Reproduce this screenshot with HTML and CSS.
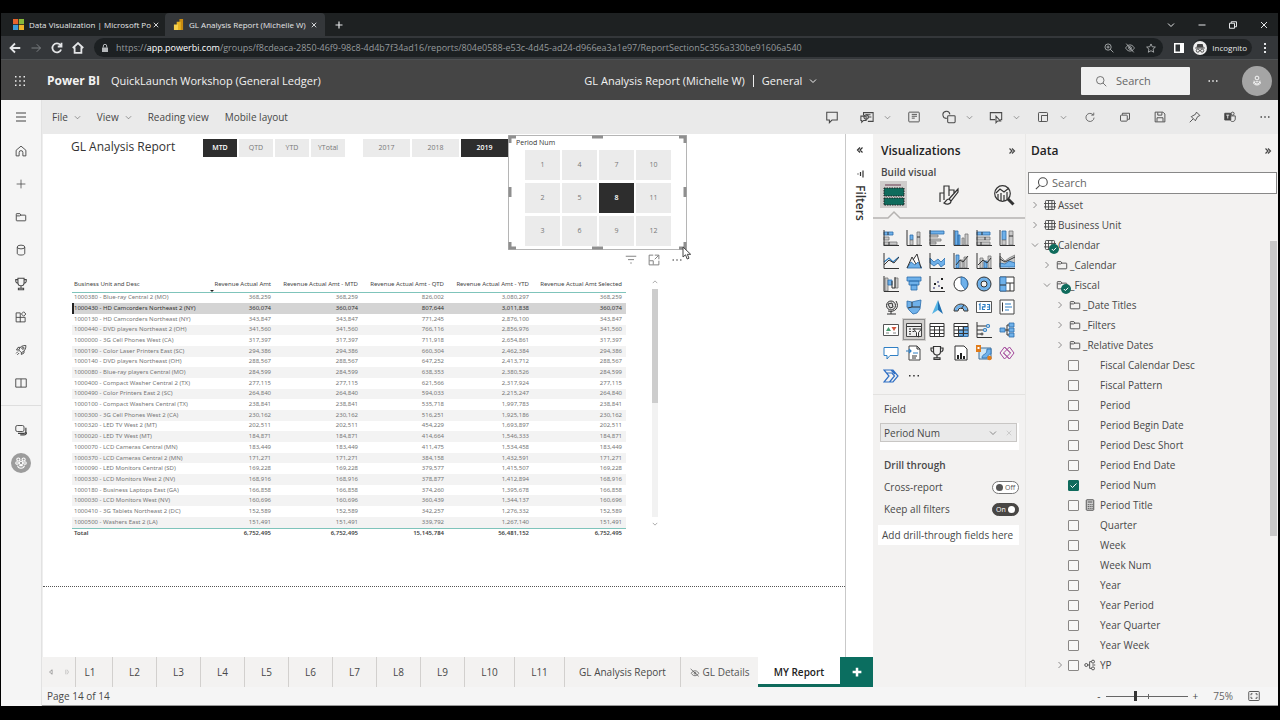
FILE: index.html
```html
<!DOCTYPE html>
<html lang="en">
<head>
<meta charset="utf-8">
<title>GL Analysis Report (Michelle W)</title>
<link rel="stylesheet" href="styles.css">
</head>
<body>
<svg class="defs" aria-hidden="true">
  <symbol id="chev" viewBox="0 0 16 16"><path d="M2 5l6 6 6-6"/></symbol>
  <symbol id="chevr" viewBox="0 0 16 16"><path d="M5 2l6 6-6 6"/></symbol>
  <symbol id="dbl" viewBox="0 0 16 16"><path d="M3 3l5 5-5 5M8 3l5 5-5 5"/></symbol>
  <symbol id="x" viewBox="0 0 16 16"><path d="M2 2l12 12M14 2L2 14"/></symbol>
  <symbol id="plus" viewBox="0 0 16 16"><path d="M8 1v14M1 8h14"/></symbol>
  <symbol id="dots" viewBox="0 0 16 16"><path d="M2 7h2v2H2zM7 7h2v2H7zM12 7h2v2h-2z" fill="currentColor" stroke="none"/></symbol>
  <symbol id="mag" viewBox="0 0 16 16"><circle cx="7" cy="7" r="5"/><path d="M10.600 10.600L15 15"/></symbol>
  <symbol id="folder" viewBox="0 0 16 16"><path d="M2 3.500h4.500l1.500 2h5.500a.8.8 0 0 1 .8.8v6a.8.8 0 0 1-.8.8h-11a.8.8 0 0 1-.8-.8V4.300a.8.8 0 0 1 .3-.8zM2 6.500h4l2-1"/></symbol>
  <symbol id="tbl" viewBox="0 0 16 16"><rect x="2" y="2" width="12" height="12" rx="1"/><path d="M0 6h16M0 10.500h16M6 2v12M10.500 2v12"/></symbol>
  <symbol id="tick" viewBox="0 0 16 16"><circle cx="8" cy="8" r="8" fill="#0f6b5c" stroke="none"/><path d="M4.500 8l2.500 2.500 4.500-4.500" stroke="#fff" stroke-width="1.600"/></symbol>
  <symbol id="trophy" viewBox="0 0 16 16"><path d="M4.500 1.500h7v5a3.500 3.500 0 0 1-7 0zM4.500 3H2v1.500a2.500 2.500 0 0 0 2.700 2.500M11.500 3H14v1.500A2.500 2.500 0 0 1 11.300 7M8 10v3M5 14.500v-1.700h6v1.700z"/></symbol>
</svg>

<div class="window">
  <div class="tabstrip">
    <div class="btab">
      <svg class="i12" viewBox="0 0 12 12"><path fill="#e8642c" d="M0 0h5.600v5.600H0z"/><path fill="#86b83a" d="M6.400 0H12v5.600H6.400z"/><path fill="#3c9ad6" d="M0 6.400h5.600V12H0z"/><path fill="#f0b429" d="M6.400 6.400H12V12H6.400z"/></svg>
      <span class="btab-name">Data Visualization | Microsoft Po</span>
      <button class="plain" aria-label="Close tab"><svg class="ico i6 heavy"><use href="#x"/></svg></button>
    </div>
    <div class="btab current">
      <svg class="i12" viewBox="0 0 12 12"><path fill="#c78a12" d="M7 0h4v12H7z"/><path fill="#e8b422" d="M4 3h4.500v9H4z"/><path fill="#f6d04d" d="M1 6h4.500v6H1z"/></svg>
      <span class="btab-name">GL Analysis Report (Michelle W)</span>
      <button class="plain" aria-label="Close tab"><svg class="ico i6 heavy"><use href="#x"/></svg></button>
    </div>
    <button class="plain newtab" aria-label="New tab"><svg class="ico i8 heavy"><use href="#plus"/></svg></button>
    <div class="wincontrols">
      <button class="plain" aria-label="Tabs"><svg class="ico i8"><use href="#chev"/></svg></button>
      <button class="plain" aria-label="Minimize"><svg class="ico i8" viewBox="0 0 16 16"><path d="M1 8h14"/></svg></button>
      <button class="plain" aria-label="Restore"><svg class="ico i8" viewBox="0 0 16 16"><path d="M1 4.500h10v10H1zM4.500 4V1.500H15v10h-3.500"/></svg></button>
      <button class="plain" aria-label="Close"><svg class="ico i8"><use href="#x"/></svg></button>
    </div>
  </div>

  <div class="addressbar">
    <div class="navbtns">
      <button class="plain" aria-label="Back"><svg class="ico i12 heavy" viewBox="0 0 16 16"><path d="M15 8H2M8 2L2 8l6 6"/></svg></button>
      <button class="plain dim" aria-label="Forward"><svg class="ico i12" viewBox="0 0 16 16"><path d="M2 8h12M9 3l5 5-5 5"/></svg></button>
      <button class="plain" aria-label="Reload"><svg class="ico i12 heavy" viewBox="0 0 16 16"><path d="M13.500 10A6 6 0 1 1 12.500 4L14 6M14 1v5H9"/></svg></button>
      <button class="plain" aria-label="Home"><svg class="ico i12 heavy" viewBox="0 0 16 16"><path d="M1 8l7-6.500L15 8M3.500 7v7.500h9V7"/></svg></button>
    </div>
    <div class="omnibox">
      <svg class="i8 lock" viewBox="0 0 8 8"><path d="M1 3.500h6V8H1z" fill="#b5b8bb"/><path d="M2.300 3.500V2a1.700 1.700 0 0 1 3.400 0v1.500" fill="none" stroke="#b5b8bb"/></svg>
      <span class="url">https://<b>app.powerbi.com</b>/groups/f8cdeaca-2850-46f9-98c8-4d4b7f34ad16/reports/804e0588-e53c-4d45-ad24-d966ea3a1e97/ReportSection5c356a330be91606a540</span>
      <div class="omni-icons">
        <svg class="ico i10" viewBox="0 0 16 16"><circle cx="6.500" cy="6.500" r="5"/><path d="M10 10l5 5M4 6.500h5M6.500 4v5"/></svg>
        <svg class="ico i10" viewBox="0 0 16 16"><path d="M1 8s2.500-5 7-5 7 5 7 5-2.500 5-7 5-7-5-7-5zM2 1l12 14"/><circle cx="8" cy="8" r="2.200"/></svg>
        <svg class="ico i10" viewBox="0 0 16 16"><path d="M8 1.500l2 4.500 5 .5-3.700 3.300 1 5L8 12.300l-4.300 2.500 1-5L1 6.500 6 6z"/></svg>
      </div>
    </div>
    <svg class="i10 side" viewBox="0 0 10 10"><path d="M0 0h10v10H0z" fill="#fff"/><path d="M1.500 1.500H6v7H1.500z" fill="#303437"/></svg>
    <div class="incog">
      <svg class="i14" viewBox="0 0 16 16"><circle cx="8" cy="8" r="8" fill="#eee"/><path d="M5 3.500h6l1 3.500H4zM2.500 7.500h11v1h-11z" fill="#444"/><g fill="none" stroke="#444"><circle cx="5.500" cy="11" r="1.800"/><circle cx="10.500" cy="11" r="1.800"/><path d="M7 11h2"/></g></svg>
      <span>Incognito</span>
    </div>
    <button class="plain kebab" aria-label="Menu"><svg class="i10" viewBox="0 0 10 10"><path d="M4 0h2v2H4zM4 4h2v2H4zM4 8h2v2H4z" fill="currentColor"/></svg></button>
  </div>

  <header class="apphead">
    <div class="brand">
      <svg class="i10" viewBox="0 0 10 10"><path fill="#eee" d="M0 0h1.500v1.500H0zM4.200 0h1.500v1.500H4.200zM8.500 0H10v1.500H8.500zM0 4.200h1.500v1.500H0zM4.200 4.200h1.500v1.500H4.200zM8.500 4.200H10v1.500H8.500zM0 8.500h1.500V10H0zM4.200 8.500h1.500V10H4.200zM8.500 8.500H10V10H8.500z"/></svg>
      <strong>Power BI</strong>
      <span>QuickLaunch Workshop (General Ledger)</span>
    </div>
    <button class="plain doc"><span>GL Analysis Report (Michelle W)</span><span class="bar"></span><span>General</span><svg class="ico i8"><use href="#chev"/></svg></button>
    <div class="headright">
      <label class="hsearch"><svg class="ico i12"><use href="#mag"/></svg><input type="text" placeholder="Search" aria-label="Search"></label>
      <button class="plain" aria-label="More"><svg class="ico i12"><use href="#dots"/></svg></button>
      <button class="avatar" aria-label="Account"><svg class="ico i12" viewBox="0 0 16 16"><circle cx="8" cy="4" r="2.500"/><path d="M4 7.500c0 6 8 6 8 0M3.500 9.500c-1 5 10 5 9 0M6 9h4"/></svg></button>
    </div>
  </header>

  <div class="shell">
    <nav class="rail" aria-label="Main">
      <button class="plain burger" aria-label="Expand"><svg class="ico i12" viewBox="0 0 12 12"><path d="M1 2h10M1 6h10M1 10h10"/></svg></button>
      <div class="rail-list">
        <button class="plain" aria-label="Home"><svg class="ico i12" viewBox="0 0 16 16"><path d="M1.500 7L8 1.500 14.500 7v7.500h-4V10a2.500 2.500 0 0 0-5 0v4.500h-4z"/></svg></button>
        <button class="plain" aria-label="Create"><svg class="ico i10"><use href="#plus"/></svg></button>
        <button class="plain" aria-label="Browse"><svg class="ico i12"><use href="#folder"/></svg></button>
        <button class="plain" aria-label="Data hub"><svg class="ico i12" viewBox="0 0 16 16"><ellipse cx="8" cy="4" rx="5" ry="2.500"/><path d="M3 4v8.500c0 3 10 3 10 0V4"/></svg></button>
        <button class="plain" aria-label="Metrics"><svg class="ico i14"><use href="#trophy"/></svg></button>
        <button class="plain" aria-label="Apps"><svg class="ico i12" viewBox="0 0 16 16"><path d="M1.500 2.500h5.500v12h-5.500zM1.500 8.500h12v6h-7M11.500 1l3 3-3 3-3-3z"/></svg></button>
        <button class="plain" aria-label="Learn"><svg class="ico i12" viewBox="0 0 16 16"><path d="M5 8c1-4 5-6.500 9.500-6C15 6.500 12 10.500 8.500 11.500zM5 8H2l2-3.500h3M8.500 11.500V14l3.500-2V9M4 10l-2.500 2.500M5.500 12l-2.500 2.500"/><circle cx="10.500" cy="5.500" r="1.500"/></svg></button>
        <button class="plain" aria-label="Workspaces"><svg class="ico i12" viewBox="0 0 16 16"><path d="M1 2.500h14v11H1zM8 2.500v11"/></svg></button>
      </div>
      <div class="rail-low">
        <button class="plain" aria-label="Deployment"><svg class="ico i12" viewBox="0 0 16 16"><rect x="1" y="2" width="11" height="8" rx="2"/><path d="M4 12.500h8a2.500 2.500 0 0 0 2.500-2.500V5M7 14.500h5a3.500 3.500 0 0 0 3.500-3.500" stroke-width="1.600"/></svg></button>
        <button class="badge" aria-label="Workspace"><svg class="ico i14" viewBox="0 0 16 16"><circle cx="5" cy="4" r="1.800"/><circle cx="11" cy="4" r="1.800"/><circle cx="3.500" cy="8" r="1.500"/><circle cx="12.500" cy="8" r="1.500"/><circle cx="8" cy="8" r="2"/><path d="M4 11c1 4 7 4 8 0M6 11h4"/></svg></button>
      </div>
    </nav>

    <div class="work">
      <div class="toolbar">
        <button class="plain menu">File<svg class="ico i8"><use href="#chev"/></svg></button>
        <button class="plain menu">View<svg class="ico i8"><use href="#chev"/></svg></button>
        <button class="plain menu">Reading view</button>
        <button class="plain menu">Mobile layout</button>
        <div class="tools">
          <button class="plain" aria-label="Comment"><svg class="ico i14" viewBox="0 0 16 16"><path d="M2 2.500h12v9H8l-3 3v-3H2z"/></svg></button>
          <button class="plain" aria-label="Copilot"><svg class="ico i14" viewBox="0 0 16 16"><path d="M4 6V3h11v10H9M7 5.500h5M9 8h4M1 7h6v5H4l-2 2v-2H1z"/><circle cx="7" cy="8" r="2.500"/></svg></button>
          <svg class="ico i8 drop"><use href="#chev"/></svg>
          <button class="plain" aria-label="Text box"><svg class="ico i12" viewBox="0 0 16 16"><rect x="1" y="1.500" width="14" height="13" rx="1"/><path d="M5 4.500h7M5 7h7M5 9.500h4"/></svg></button>
          <button class="plain" aria-label="Shapes"><svg class="ico i14" viewBox="0 0 16 16"><path d="M5.500 9.500A4 4 0 1 1 9 5"/><rect x="6.500" y="6.500" width="8.500" height="8" rx="1"/></svg></button>
          <svg class="ico i8 drop"><use href="#chev"/></svg>
          <button class="plain" aria-label="Buttons"><svg class="ico i14" viewBox="0 0 16 16"><path d="M7 11H1.500V3h13v8H13M8 7v7.500l2-2h3z"/></svg></button>
          <svg class="ico i8 drop"><use href="#chev"/></svg>
          <button class="plain" aria-label="Visual interactions"><svg class="ico i12" viewBox="0 0 16 16"><rect x="2" y="2" width="12" height="12" rx="1"/><path d="M6 14V6h8"/></svg></button>
          <svg class="ico i8 drop"><use href="#chev"/></svg>
          <button class="plain" aria-label="Refresh"><svg class="ico i10" viewBox="0 0 16 16"><path d="M13 4.500A6.500 6.500 0 1 0 14.500 9M14 1v4h-4"/></svg></button>
          <button class="plain" aria-label="Duplicate"><svg class="ico i12" viewBox="0 0 16 16"><rect x="2" y="5.500" width="9" height="8" rx="1"/><path d="M4.500 5V3H14v8h-2.500"/></svg></button>
          <button class="plain" aria-label="Save"><svg class="ico i12" viewBox="0 0 16 16"><path d="M1.500 1.500h10.500l2.500 2.500v10.500h-13zM4 14V9h8v5M5 2v3.500h5.500V2"/></svg></button>
          <button class="plain" aria-label="Pin"><svg class="ico i12" viewBox="0 0 16 16"><path d="M10 1.500l4.500 4.500-3 1.500-3 5.500-5.500-5.500 5.500-3zM5.500 10.500L1 15"/></svg></button>
          <button class="plain" aria-label="Teams"><svg class="ico i12" viewBox="0 0 16 16"><path d="M1 3h8v9H1z" fill="#444"/><path d="M3 5.500h4M5 5.500V10" stroke="#eee"/><circle cx="11.500" cy="3.500" r="2"/><path d="M9 6.500h6v4c0 4-5 4.500-6.500 2"/></svg></button>
          <button class="plain" aria-label="More"><svg class="ico i12"><use href="#dots"/></svg></button>
        </div>
      </div>

      <div class="panes">
        <div class="stagecol">
          <div class="stagerow">
            <main class="canvas">
              <div class="page">
                <div class="toprow">
                  <h1>GL Analysis Report</h1>
                  <div class="slicer kind"><button class="on">MTD</button><button>QTD</button><button>YTD</button><button>YTotal</button></div>
                  <div class="slicer years"><button>2017</button><button>2018</button><button class="on">2019</button></div>
                  <section class="period">
                    <h2>Period Num</h2>
                    <div class="period-grid">
                      <button>1</button><button>2</button><button>3</button><button>4</button><button>5</button><button>6</button><button>7</button><button class="on">8</button><button>9</button><button>10</button><button>11</button><button>12</button>
                    </div>
                    <svg class="handles" viewBox="0 0 179 115" fill="none" stroke="#8f8f8f" stroke-width="3"><path d="M2 8V2h6M171 2h6v6M2 107v6h6M171 113h6v-6M84 2h11M84 113h11M2 52v10M177 52v10"/></svg>
                    <svg class="cursor" viewBox="0 0 10 14"><path d="M1 1v10l2.500-2.200L5.200 13l1.800-.8-1.700-3.900h3.400z" fill="#fff" stroke="#444"/></svg>
                  </section>
                </div>
                <div class="vistools">
                  <svg class="ico i12" viewBox="0 0 16 16"><path d="M1 3h14M4 7.500h8M7 12h2"/></svg>
                  <svg class="ico i12" viewBox="0 0 16 16"><path d="M7 1.500H1.500v13h13V9M9 1.500h5.500V7M14 2L9 7M2 9h5v5"/></svg>
                  <svg class="ico i12"><use href="#dots"/></svg>
                </div>
                <div class="tablerow">
                  <table class="ledger">
                    <colgroup><col class="c-desc"><col class="c-amt"><col class="c-mtd"><col class="c-qtd"><col class="c-ytd"><col class="c-sel"></colgroup>
                    <thead><tr><th>Business Unit and Desc</th><th class="sorted">Revenue Actual Amt</th><th>Revenue Actual Amt - MTD</th><th>Revenue Actual Amt - QTD</th><th>Revenue Actual Amt - YTD</th><th>Revenue Actual Amt Selected</th></tr></thead>
                    <tbody>
                      <tr><td>1000380 - Blue-ray Central 2 (MO)</td><td>368,259</td><td>368,259</td><td>826,002</td><td>3,080,297</td><td>368,259</td></tr>
                      <tr class="picked"><td>1000430 - HD Camcorders Northeast 2 (NY)</td><td>360,074</td><td>360,074</td><td>807,644</td><td>3,011,838</td><td>360,074</td></tr>
                      <tr><td>1000130 - HD Camcorders Northeast (NY)</td><td>343,847</td><td>343,847</td><td>771,245</td><td>2,876,100</td><td>343,847</td></tr>
                      <tr><td>1000440 - DVD players Northeast 2 (OH)</td><td>341,560</td><td>341,560</td><td>766,116</td><td>2,856,976</td><td>341,560</td></tr>
                      <tr><td>1000000 - 3G Cell Phones West (CA)</td><td>317,397</td><td>317,397</td><td>711,918</td><td>2,654,861</td><td>317,397</td></tr>
                      <tr><td>1000190 - Color Laser Printers East (SC)</td><td>294,386</td><td>294,386</td><td>660,304</td><td>2,462,384</td><td>294,386</td></tr>
                      <tr><td>1000140 - DVD players Northeast (OH)</td><td>288,567</td><td>288,567</td><td>647,252</td><td>2,413,712</td><td>288,567</td></tr>
                      <tr><td>1000080 - Blue-ray players Central (MO)</td><td>284,599</td><td>284,599</td><td>638,353</td><td>2,380,526</td><td>284,599</td></tr>
                      <tr><td>1000400 - Compact Washer Central 2 (TX)</td><td>277,115</td><td>277,115</td><td>621,566</td><td>2,317,924</td><td>277,115</td></tr>
                      <tr><td>1000490 - Color Printers East 2 (SC)</td><td>264,840</td><td>264,840</td><td>594,033</td><td>2,215,247</td><td>264,840</td></tr>
                      <tr><td>1000100 - Compact Washers Central (TX)</td><td>238,841</td><td>238,841</td><td>535,718</td><td>1,997,783</td><td>238,841</td></tr>
                      <tr><td>1000300 - 3G Cell Phones West 2 (CA)</td><td>230,162</td><td>230,162</td><td>516,251</td><td>1,925,186</td><td>230,162</td></tr>
                      <tr><td>1000320 - LED TV West 2 (MT)</td><td>202,511</td><td>202,511</td><td>454,229</td><td>1,693,897</td><td>202,511</td></tr>
                      <tr><td>1000020 - LED TV West (MT)</td><td>184,871</td><td>184,871</td><td>414,664</td><td>1,546,333</td><td>184,871</td></tr>
                      <tr><td>1000070 - LCD Cameras Central (MN)</td><td>183,449</td><td>183,449</td><td>411,475</td><td>1,534,458</td><td>183,449</td></tr>
                      <tr><td>1000370 - LCD Cameras Central 2 (MN)</td><td>171,271</td><td>171,271</td><td>384,158</td><td>1,432,591</td><td>171,271</td></tr>
                      <tr><td>1000090 - LED Monitors Central (SD)</td><td>169,228</td><td>169,228</td><td>379,577</td><td>1,415,507</td><td>169,228</td></tr>
                      <tr><td>1000330 - LCD Monitors West 2 (NV)</td><td>168,916</td><td>168,916</td><td>378,877</td><td>1,412,894</td><td>168,916</td></tr>
                      <tr><td>1000180 - Business Laptops East (GA)</td><td>166,858</td><td>166,858</td><td>374,260</td><td>1,395,678</td><td>166,858</td></tr>
                      <tr><td>1000030 - LCD Monitors West (NV)</td><td>160,696</td><td>160,696</td><td>360,439</td><td>1,344,137</td><td>160,696</td></tr>
                      <tr><td>1000410 - 3G Tablets Northeast 2 (DC)</td><td>152,589</td><td>152,589</td><td>342,257</td><td>1,276,332</td><td>152,589</td></tr>
                      <tr><td>1000500 - Washers East 2 (LA)</td><td>151,491</td><td>151,491</td><td>339,792</td><td>1,267,140</td><td>151,491</td></tr>
                    </tbody>
                    <tfoot><tr><td>Total</td><td>6,752,495</td><td>6,752,495</td><td>15,145,784</td><td>56,481,152</td><td>6,752,495</td></tr></tfoot>
                  </table>
                  <div class="vscroll"><svg class="ico i6 flip"><use href="#chev"/></svg><div class="track"><div class="thumb"></div></div><svg class="ico i6"><use href="#chev"/></svg></div>
                </div>
              </div>
            </main>
            <aside class="filters">
              <button class="plain" aria-label="Expand filters"><svg class="ico i8 flipx heavy"><use href="#dbl"/></svg></button>
              <svg class="ico i8 heavy" viewBox="0 0 16 16"><path d="M14 1v14M9 4v8M4 7v2"/></svg>
              <span>Filters</span>
            </aside>
          </div>
          <div class="pagetabs">
            <div class="arrows"><svg class="ico i6" viewBox="0 0 16 16" stroke-width="2"><path d="M11 2L4 8l7 6z"/></svg><svg class="ico i6 faint" viewBox="0 0 16 16"><path d="M4 2v12M8 2l5 6-5 6z"/></svg></div>
            <button class="first">L1</button><button>L2</button><button>L3</button><button>L4</button><button>L5</button><button>L6</button><button>L7</button><button>L8</button><button>L9</button><button class="mid">L10</button><button class="mid">L11</button><button class="wide">GL Analysis Report</button>
            <button class="hid"><svg class="ico i10" viewBox="0 0 16 16"><path d="M2 10s2-4 6-4 6 4 6 4-2 4-6 4-6-4-6-4zM1 3l13 12"/><circle cx="8" cy="10" r="1.500"/></svg>GL Details</button>
            <button class="cur">MY Report</button>
            <button class="add" aria-label="New page"><svg class="ico i10" viewBox="0 0 16 16"><path d="M8 1v14M1 8h14" stroke-width="4"/></svg></button>
          </div>
        </div>

        <aside class="viz">
          <div class="panehead"><h3>Visualizations</h3><button class="plain" aria-label="Collapse"><svg class="ico i8 heavy"><use href="#dbl"/></svg></button></div>
          <p class="sub">Build visual</p>
          <div class="modes">
            <button class="plain mode on" aria-label="Build"><svg width="22" height="24" viewBox="0 0 22 24"><path d="M2 2h16" stroke="#8a6a78" stroke-width="1.500"/><path d="M1 5h20v8H1zM1 15h20v7H1z" fill="#0f6b5c" stroke="#222" stroke-dasharray="1.500 1"/></svg></button>
            <button class="plain mode" aria-label="Format"><svg width="22" height="22" viewBox="0 0 22 22" fill="none" stroke="#333" stroke-width="1.200"><path d="M2 18V9h4v7M6 9V2h5v10M11 6h5v3M20 5L11 15l2 2 7-9zM11 15c-3 0-3 3-5 4 3 2 7 1 7-2"/></svg></button>
            <button class="plain mode" aria-label="Analytics"><svg width="22" height="22" viewBox="0 0 22 22" fill="none" stroke="#333" stroke-width="1.200"><circle cx="9.500" cy="9.500" r="7.800"/><path d="M3 9l4-4 4 3 5-4M5 16V10M8 17V9M11 17v-6M14 15V8"/><path d="M15 15l5.500 5.500" stroke-width="3"/></svg></button>
          </div>
          <svg class="notch" viewBox="0 0 152 9" preserveAspectRatio="xMinYMid slice"><path d="M0 8h15l6-6 6 6h400" fill="none" stroke="#b5b3b1" stroke-width="1.500"/></svg>

          <div class="gallery">
            <button aria-label="Stacked bar"><svg viewBox="0 0 16 16"><path class="b" d="M1 2h9v3H1z"/><path class="g" d="M1 7h5v3H1zM1 12h13v3H1z"/><path class="l" d="M1 0v16M1 15.500h15M5 2v3M6 12v3"/></svg></button>
            <button aria-label="Stacked column"><svg viewBox="0 0 16 16"><path class="b" d="M4 5h3v5H4z"/><path class="g" d="M4 10h3v5H4zM11 2h3v13h-3z"/><path class="l" d="M1 0v15.500h15M11 7h3"/></svg></button>
            <button aria-label="Clustered bar"><svg viewBox="0 0 16 16"><path class="b" d="M1 1h14v3H1z"/><path class="g" d="M1 5h8v2H1zM1 9h11v2H1zM1 12h6v2H1z"/><path class="l" d="M1 0v15.500h15"/></svg></button>
            <button aria-label="Clustered column"><svg viewBox="0 0 16 16"><path class="b" d="M2 1h3v14H2zM5 5h2v10H5z"/><path class="g" d="M9 8h2v7H9zM12 4h3v11h-3z"/><path class="l" d="M1 0v15.500h15"/></svg></button>
            <button aria-label="100% bar"><svg viewBox="0 0 16 16"><path class="b" d="M1 2h13v3H1z"/><path class="g" d="M1 7h13v3H1zM1 12h13v3H1z"/><path class="l" d="M1 0v16M1 15.500h15M6 2v3M9 7v3M5 12v3"/></svg></button>
            <button aria-label="100% column"><svg viewBox="0 0 16 16"><path class="b" d="M3 1h4v9H3z"/><path class="g" d="M3 10h4v5H3zM10 1h4v14h-4z"/><path class="l" d="M1 0v15.500h15M10 6h4"/></svg></button>
            <button aria-label="Line"><svg viewBox="0 0 16 16"><path class="s" d="M1 9l5-4 4 4 6-5"/><path class="l" d="M1 0v15.500h15M1 12l5-5 5 3 5-6"/></svg></button>
            <button aria-label="Area"><svg viewBox="0 0 16 16"><path d="M5 14l5-12 5 12z" fill="#fff"/><path class="b" d="M1 15l4-6 4 3 3-3 4 6z"/><path class="l" d="M1 15l5-11 4 7M7 7l4-6 4 14"/></svg></button>
            <button aria-label="Stacked area"><svg viewBox="0 0 16 16"><path class="b" d="M1 5l4 4 4-3 3 3 4-4v6l-4 3-3-4-4 3-4-3z"/><path class="l" d="M1 0v15.500h15"/></svg></button>
            <button aria-label="Line and stacked column"><svg viewBox="0 0 16 16"><path class="b" d="M3 2h3v13H3z"/><path class="g" d="M7 7h3v8H7zM11 4h3v11h-3z"/><path class="l" d="M1 0v15.500h15M3 12l4-5 3 2 5-6"/></svg></button>
            <button aria-label="Line and clustered column"><svg viewBox="0 0 16 16"><path class="g" d="M4 5h3v10H4zM12 3h3v12h-3z"/><path class="b" d="M8 8h3v7H8z"/><path class="l" d="M1 0v15.500h15M2 12l5-5 4 3 4-5"/></svg></button>
            <button aria-label="Ribbon"><svg viewBox="0 0 16 16"><path class="g" d="M1 3l5 5 4-3 6-3v9l-6 3-4-2-5 2z"/><path class="b" d="M1 10l5 1 4-3 6 2v4H1z"/><path class="l" d="M1 0v15.500h15M1 6l5 3 4-2 6-3"/></svg></button>
            <button aria-label="Waterfall"><svg viewBox="0 0 16 16"><path class="g" d="M2 2h3v13H2zM12 2h3v10h-3z"/><path class="b" d="M5 4h4v5H5z"/><path class="l" d="M1 0v15.500h15M9 5v7h3V1"/></svg></button>
            <button aria-label="Funnel"><svg viewBox="0 0 16 16"><path class="b" d="M1 1h14v4H1zM3 5h10v4H3zM5 9h6v5H5z"/></svg></button>
            <button aria-label="Scatter"><svg viewBox="0 0 16 16"><path class="l" d="M1 0v15.500h15"/><path d="M12 2h2v2h-2zM5 7h2v2H5zM12 11h2v2h-2z" fill="#222"/><path d="M8 5h2v2H8zM9 9h2v2H9zM4 11h2v2H4z" fill="#88a"/></svg></button>
            <button aria-label="Pie"><svg viewBox="0 0 16 16"><circle cx="8" cy="8" r="7" fill="#fff" stroke="#333"/><path class="b" d="M8 1a7 7 0 0 1 4 12.500L8 8z"/></svg></button>
            <button aria-label="Donut"><svg viewBox="0 0 16 16"><circle cx="8" cy="8" r="5" fill="none" stroke="#6fb1ea" stroke-width="4"/><circle class="l" cx="8" cy="8" r="7"/><circle class="l" cx="8" cy="8" r="3"/></svg></button>
            <button aria-label="Treemap"><svg viewBox="0 0 16 16"><path d="M1 1h14v14H1z" fill="#fff" stroke="#333"/><path class="b" d="M1 1h6v14H1z"/><path class="l" d="M7 7h8M11 7v8M1 9h6"/></svg></button>
            <button aria-label="Map"><svg viewBox="0 0 16 16"><circle cx="8" cy="6.500" r="4.500" fill="#ddd" stroke="#333"/><path class="l" d="M13 2c4 6-1 12-8 10M8 12v3M4 15h9M5 5l4-1 1 4-3 1z"/></svg></button>
            <button aria-label="Filled map"><svg viewBox="0 0 16 16"><path class="b" d="M1 2l5 1 4-1 5-1-1 9-3 4-4 1-4-4-2-3z"/><path class="l" d="M6 3v5h8M6 8l-4 1"/></svg></button>
            <button aria-label="Azure map"><svg viewBox="0 0 16 16"><path d="M9 1l5 14-5-4z" fill="#1f6fb0"/><path d="M9 1L3 15l6-4z" fill="#56b4e4"/></svg></button>
            <button aria-label="Gauge"><svg viewBox="0 0 16 16"><path d="M3 12a5 5 0 0 1 10 0" fill="none" stroke="#6fb1ea" stroke-width="3"/><path class="l" d="M1 12a7 7 0 0 1 14 0h-4a3 3 0 0 0-6 0zM8 10l3-4"/></svg></button>
            <button aria-label="Card"><svg viewBox="0 0 16 16"><path d="M.5 2.500h15v11H.5z" fill="#fff" stroke="#555"/><path class="s" d="M3 6l1-1v6M6.500 5.500h2.500v2.300H6.500v2.700H9M11 5.500h2.500v5H11M11 8h2.500"/></svg></button>
            <button aria-label="Multi-row card"><svg viewBox="0 0 16 16"><path d="M1 1h14v14H1z" fill="#fff" stroke="#444"/><path class="s" d="M6 5h6M6 8h7M6 11h4"/><path class="l" d="M3.500 3.500v9"/></svg></button>
            <button aria-label="KPI"><svg viewBox="0 0 16 16"><path d="M.5 2.500h15v11H.5z" fill="#fff" stroke="#555"/><path d="M3 9l2.500-4L8 9z" fill="#4a9b6e"/><path d="M8.500 5h5L11 9z" fill="#d0543c"/><path class="l" d="M3 11h3M10 11h3" stroke-width=".6"/></svg></button>
            <button class="sel" aria-label="Slicer"><svg viewBox="0 0 16 16"><path d="M.5 1.500h15v13H.5z" fill="#eee" stroke="#444"/><path class="l" d="M1 4.500h14M3 7h2M3 9.500h2M3 12h2M6.500 7h3M6.500 9.500h2"/><path d="M7.500 7h8l-3 3.500V15l-2-1v-3.500z" fill="#fff" stroke="#333"/></svg></button>
            <button aria-label="Table"><svg viewBox="0 0 16 16"><path d="M1 1.500h14v13H1z" fill="#fff" stroke="#333"/><path class="l" d="M1 4.500h14M1 8h14M1 11.500h14M5.500 4v10M10.500 4v10"/></svg></button>
            <button aria-label="Matrix"><svg viewBox="0 0 16 16"><path d="M1 1.500h14v13H1z" fill="#fff" stroke="#333"/><path class="b" d="M10 5h5v9.500h-5zM5.500 8h5v6h-5z"/><path class="l" d="M1 4.500h14M1 8h14M1 11.500h14M5.500 4v10M10.500 4v10"/></svg></button>
            <button aria-label="R visual"><svg viewBox="0 0 16 16"><path class="l" d="M1 0v15.500h15M1 4h9M1 8h6M1 12h4"/><circle class="s" cx="12" cy="4" r="1.500"/><circle class="s" cx="9" cy="8" r="1.500"/><circle class="l" cx="6" cy="12" r="1"/></svg></button>
            <button aria-label="Decomposition tree"><svg viewBox="0 0 16 16"><path class="b" d="M1 6h5v4H1zM10 1h5v4h-5zM10 6h5v4h-5zM10 11h5v4h-5z"/><path class="l" d="M6 8h4M8 8V3h2M8 8v5h2"/></svg></button>
            <button aria-label="Q&amp;A"><svg viewBox="0 0 16 16"><path d="M1 2.500h14v8H7l-3 3.500v-3.500H1z" fill="#fff" stroke="#2f7fc4"/></svg></button>
            <button aria-label="Narrative"><svg viewBox="0 0 16 16"><path d="M3 1h8l3 3v11H3z" fill="#fff" stroke="#444"/><path class="l" d="M11 1v3h3M6 11h5M6 13h4"/><path class="s" d="M0 6h5M3 4l2 2-2 2M7 8h5"/></svg></button>
            <button aria-label="Goals"><svg viewBox="0 0 16 16" fill="none" stroke="#333" stroke-width="1.200"><use href="#trophy"/></svg></button>
            <button aria-label="Paginated report"><svg viewBox="0 0 16 16"><path d="M2 1h9l3 3v11H2z" fill="#fff" stroke="#333"/><path d="M4 10h2v4H4zM7 8h2v6H7zM10 11h2v3h-2z" fill="#222"/></svg></button>
            <button aria-label="ArcGIS"><svg viewBox="0 0 16 16"><path d="M3 3h12v11H3z" fill="#cde6f7" stroke="#3c6f9a"/><path class="b" d="M6 13c0-5 5-2 5-9h4v5c-3 0-3 2-4 4z"/><path d="M0 0h5v7H0z" fill="#e07b1a"/><path d="M1.500 2h2v2h-2z" fill="#fff"/><circle cx="13.500" cy="13" r="2.300" fill="#e07b1a"/></svg></button>
            <button aria-label="Power Apps"><svg viewBox="0 0 16 16"><path d="M5.500 2L8 4.500 10.500 2 15 8l-4.500 6L8 11.500 5.500 14 1 8zM8 4.500L4.500 8 8 11.500 11.500 8zM5.500 2l6 6M10.500 14l-6-6" fill="none" stroke="#a2469a"/></svg></button>
            <button aria-label="Power Automate"><svg viewBox="0 0 16 16"><path d="M1 2h9l5 6-5 6H1l5-6zM3 5h6l2.500 3-5 6M8 2l4 4" fill="none" stroke="#2f6fc4" stroke-width="1.200"/></svg></button>
            <button aria-label="More visuals"><svg viewBox="0 0 16 16"><path d="M3 7h1.500v1.500H3zM7.200 7h1.500v1.500H7.200zM11.500 7H13v1.500h-1.500z" fill="#333"/></svg></button>
          </div>

          <div class="fieldbox">
            <p>Field</p>
            <div class="well"><button class="chip"><span>Period Num</span><svg class="ico i8"><use href="#chev"/></svg><svg class="ico i6 faint"><use href="#x"/></svg></button></div>
            <h4>Drill through</h4>
            <label class="opt"><span>Cross-report</span><span class="toggle"><input type="checkbox"><span class="state off">Off</span></span></label>
            <label class="opt"><span>Keep all filters</span><span class="toggle"><input type="checkbox" checked><span class="state">On</span></span></label>
            <div class="drop-here">Add drill-through fields here</div>
          </div>
        </aside>

        <aside class="data">
          <div class="panehead"><h3>Data</h3><button class="plain" aria-label="Collapse"><svg class="ico i8 heavy"><use href="#dbl"/></svg></button></div>
          <label class="dsearch"><svg class="ico i14 flipx"><use href="#mag"/></svg><input type="text" placeholder="Search" aria-label="Search fields"></label>
          <div class="treewrap">
            <ul class="tree">
              <li><svg class="ico i8"><use href="#chevr"/></svg><span class="ti"><svg class="ico i12"><use href="#tbl"/></svg></span>Asset</li>
              <li><svg class="ico i8"><use href="#chevr"/></svg><span class="ti"><svg class="ico i12"><use href="#tbl"/></svg></span>Business Unit</li>
              <li><svg class="ico i8"><use href="#chev"/></svg><span class="ti"><svg class="ico i12"><use href="#tbl"/></svg><svg class="ico mark"><use href="#tick"/></svg></span>Calendar</li>
              <li class="d1"><svg class="ico i8"><use href="#chevr"/></svg><span class="ti"><svg class="ico i12"><use href="#folder"/></svg></span>_Calendar</li>
              <li class="d1"><svg class="ico i8"><use href="#chev"/></svg><span class="ti"><svg class="ico i12"><use href="#folder"/></svg><svg class="ico mark"><use href="#tick"/></svg></span>_Fiscal</li>
              <li class="d2"><svg class="ico i8"><use href="#chevr"/></svg><span class="ti"><svg class="ico i12"><use href="#folder"/></svg></span>_Date Titles</li>
              <li class="d2"><svg class="ico i8"><use href="#chevr"/></svg><span class="ti"><svg class="ico i12"><use href="#folder"/></svg></span>_Filters</li>
              <li class="d2"><svg class="ico i8"><use href="#chevr"/></svg><span class="ti"><svg class="ico i12"><use href="#folder"/></svg></span>_Relative Dates</li>
              <li class="leaf"><label><input type="checkbox"><span class="kind-ico"></span>Fiscal Calendar Desc</label></li>
              <li class="leaf"><label><input type="checkbox"><span class="kind-ico"></span>Fiscal Pattern</label></li>
              <li class="leaf"><label><input type="checkbox"><span class="kind-ico"></span>Period</label></li>
              <li class="leaf"><label><input type="checkbox"><span class="kind-ico"></span>Period Begin Date</label></li>
              <li class="leaf"><label><input type="checkbox"><span class="kind-ico"></span>Period Desc Short</label></li>
              <li class="leaf"><label><input type="checkbox"><span class="kind-ico"></span>Period End Date</label></li>
              <li class="leaf"><label><input type="checkbox" checked><span class="kind-ico"></span>Period Num</label></li>
              <li class="leaf"><label><input type="checkbox"><span class="kind-ico"><svg class="ico i12" viewBox="0 0 16 16"><rect x="3" y="1" width="10" height="14" rx="1" fill="#ccc"/><path d="M5 4h6M5 7.500h1.500M7.500 7.500H9M10 7.500h1.500M5 10h1.500M7.500 10H9M10 10h1.500M5 12.500h1.500M7.500 12.500H9M10 12.500h1.500"/></svg></span>Period Title</label></li>
              <li class="leaf"><label><input type="checkbox"><span class="kind-ico"></span>Quarter</label></li>
              <li class="leaf"><label><input type="checkbox"><span class="kind-ico"></span>Week</label></li>
              <li class="leaf"><label><input type="checkbox"><span class="kind-ico"></span>Week Num</label></li>
              <li class="leaf"><label><input type="checkbox"><span class="kind-ico"></span>Year</label></li>
              <li class="leaf"><label><input type="checkbox"><span class="kind-ico"></span>Year Period</label></li>
              <li class="leaf"><label><input type="checkbox"><span class="kind-ico"></span>Year Quarter</label></li>
              <li class="leaf"><label><input type="checkbox"><span class="kind-ico"></span>Year Week</label></li>
              <li class="d2"><svg class="ico i8"><use href="#chevr"/></svg><label><input type="checkbox"><span class="kind-ico"><svg class="ico i12" viewBox="0 0 16 16"><circle cx="3" cy="8" r="2"/><circle cx="12" cy="3.500" r="2"/><circle cx="12" cy="12.500" r="2"/><path d="M5 8h2.500M10 3.500H7.500v9H10M11 8h4"/></svg></span>YP</label></li>
            </ul>
            <div class="dscroll"></div>
          </div>
        </aside>
      </div>

      <footer class="status">
        <span>Page 14 of 14</span>
        <div class="zoom">
          <button class="plain" aria-label="Zoom out">-</button>
          <input type="range" min="0" max="100" value="36" aria-label="Zoom">
          <button class="plain" aria-label="Zoom in">+</button>
          <span class="pct">75%</span>
          <button class="plain" aria-label="Fit to page"><svg class="ico i12" viewBox="0 0 16 16"><rect x="1" y="2" width="14" height="12" rx="1"/><path d="M4 7V5h2M10 5h2v2M4 9v2h2M10 11h2V9"/></svg></button>
        </div>
      </footer>
    </div>
  </div>
</div>
</body>
</html>
```

FILE: styles.css
```css
* { box-sizing: border-box; }
body { margin: 0; background: #000; color: #484848; font: 11px/16px "Open Sans", "Noto Sans", sans-serif; }
h1, h2, h3, h4, p, ul { margin: 0; padding: 0; font-weight: 400; }
ul { list-style: none; }
button, input { font: inherit; color: inherit; }
button { border: 0; padding: 0; display: flex; align-items: center; justify-content: center; white-space: nowrap; }
.plain { background: none; }
.defs { position: absolute; width: 0; height: 0; }
svg { display: block; flex: none; }
.ico { fill: none; stroke: currentColor; stroke-width: 1.2; }
.heavy { stroke-width: 2.4; }
.faint { opacity: .4; }
.i6 { width: 6px; height: 6px; }
.i8 { width: 8px; height: 8px; }
.i10 { width: 10px; height: 10px; }
.i12 { width: 12px; height: 12px; }
.i14 { width: 14px; height: 14px; }
.flip { transform: scaleY(-1); }
.flipx { transform: scaleX(-1); }

.window { min-height: 100vh; padding: 13px 2px 14px 1px; display: flex; flex-direction: column; }

/* Browser chrome */
.tabstrip { height: 23px; display: flex; background: #1e2122; color: #e4e6e8; font-size: 8px; }
.btab { display: flex; align-items: center; width: 164px; padding: 0 6px 0 12px; }
.btab.current { width: 160px; background: #34373a; border-radius: 4px 4px 0 0; padding: 0 8px; }
.btab-name { flex: 1; white-space: nowrap; }
.btab .i12 { width: 11px; height: 11px; margin-right: 5px; }
.newtab { width: 28px; }
.wincontrols { margin-left: auto; display: flex; gap: 23px; padding-right: 10px; }
.wincontrols .ico { stroke-width: 2; }
.addressbar { height: 24px; display: flex; align-items: center; background: #34373a; color: #e4e6e8; border-bottom: 1px solid #4d5052; }
.navbtns { display: flex; gap: 9px; padding: 0 10px 0 8px; }
.dim { color: #85888a; }
.omnibox { flex: 1; height: 19px; border-radius: 10px; background: #1c2022; display: flex; align-items: center; padding: 0 7px; gap: 7px; }
.url { flex: 1; font-size: 9px; color: #969a9d; white-space: nowrap; }
.url b { font-weight: 400; color: #fff; }
.omni-icons { display: flex; gap: 11px; color: #c5c8ca; }
.side { margin: 0 9px 0 11px; }
.incog { display: flex; align-items: center; gap: 5px; height: 17px; padding-right: 5px; border-radius: 9px; background: #202325; font-size: 8px; }
.kebab { padding: 0 8px; }

.apphead { height: 40px; display: flex; align-items: center; justify-content: space-between; background: #454545; color: #f2f2f2; padding: 2px 6px 0 14px; font-size: 11px; }
.brand, .doc, .headright { display: flex; align-items: center; }
.brand strong { margin: 0 11px 0 22px; font-size: 12px; font-weight: 700; }
.doc .bar { width: 1px; height: 12px; background: #eee; margin: 0 8px; }
.doc .i8 { margin-left: 7px; stroke-width: 2; }
.hsearch { width: 109px; height: 28px; background: #f0f0f0; border-radius: 1px; color: #666; display: flex; align-items: center; padding-left: 14px; gap: 9px; margin-right: 17px; }
.hsearch input, .dsearch input { border: 0; background: none; outline: 0; padding: 0; min-width: 0; flex: 1; }
::placeholder { color: #666; opacity: 1; }
.avatar { width: 30px; height: 30px; border-radius: 50%; background: #a5a5a5; color: #fff; margin-left: 23px; }

/* Application shell */
.shell { flex: 1; display: flex; background: #f5f5f5; min-height: 0; }
.rail { width: 41px; border-right: 1px solid #e2e2e2; color: #444; display: flex; flex-direction: column; }
.rail > *, .rail-list > *, .rail-low > * { width: 100%; }
.burger { height: 34px; }
.rail-list { height: 272px; padding-bottom: 5px; border-bottom: 1px solid #dedede; display: flex; flex-direction: column; justify-content: space-between; }
.rail-list button, .rail-low button { height: 33px; }
.rail-low { padding-top: 7px; display: flex; flex-direction: column; align-items: center; }
.rail-low .badge { width: 20px; height: 20px; border-radius: 50%; background: #9c9c9c; color: #fff; margin-top: 7px; }

.work { flex: 1; display: flex; flex-direction: column; min-width: 0; }
.toolbar { height: 34px; background: #eaeaea; display: flex; align-items: center; padding: 0 5px 0 10px; gap: 16px; font-size: 10px; }
.menu { gap: 6px; }
.menu .ico, .drop { width: 7px; height: 7px; }
.tools { margin-left: auto; display: flex; align-items: center; }
.tools button { width: 16px; margin-left: 19px; }
.tools .drop { margin-left: 9px; }
.tools .drop + button { margin-left: 15px; }

.panes { flex: 1; display: flex; min-height: 0; }
.stagecol { flex: 1; display: flex; flex-direction: column; background: #fff; min-width: 0; }
.stagerow { flex: 1; display: flex; }
.canvas { flex: 1; border-left: 1px solid #eee; border-right: 1px solid #c9c9c9; }
.page { height: 453px; border-bottom: 1px dotted #555; padding: 1px 0 0 28px; }
.toprow { display: flex; align-items: flex-start; }
.toprow h1 { width: 132px; font-size: 12px; line-height: 24px; color: #333; white-space: nowrap; }
.slicer { display: flex; gap: 2px; margin-top: 4px; margin-right: 18px; }
.slicer button { height: 18px; width: 34px; background: #ebebeb; color: #777; font-size: 7px; }
.slicer.years { margin-right: 0; }
.slicer.years button { width: 47px; }
.slicer .on, .period .on { background: #2d2d2d; color: #fff; font-weight: 600; }
.period { position: relative; width: 179px; height: 115px; border: 1px solid #b5b5b5; background: #fff; padding-left: 7px; }
.period h2 { font-size: 7px; line-height: 14px; color: #333; }
.period-grid { display: grid; grid-auto-flow: column; grid-template-rows: repeat(3, 30px); grid-template-columns: repeat(4, 35px); gap: 3px 2px; padding-left: 9px; }
.period-grid button { background: #ebebeb; color: #777; font-size: 7px; }
.handles { position: absolute; left: -1px; top: -1px; width: 179px; height: 115px; }
.cursor { position: absolute; left: 173px; top: 110px; width: 10px; height: 14px; z-index: 1; }
.vistools { display: flex; justify-content: flex-end; gap: 11px; width: 612px; padding: 4px 0; color: #777; }
.tablerow { display: flex; gap: 26px; padding: 7px 0 0 1px; }

.ledger { width: 554px; height: 262px; table-layout: fixed; border-collapse: collapse; font: 6px/9px "Noto Sans", "Open Sans", sans-serif; color: #777; }
.ledger th, .ledger td { padding: 0 2px; text-align: right; white-space: nowrap; font-weight: 400; }
.ledger th:first-child, .ledger td:first-child { text-align: left; }
.ledger th:last-child, .ledger td:last-child { padding-right: 4px; }
.ledger th { height: 15px; color: #444; border-bottom: 1px solid #7fc4bb; position: relative; }
.ledger .sorted::after { content: ""; position: absolute; left: 2px; bottom: 0; border: 2px solid transparent; border-top-color: #222; border-bottom: 0; }
.c-desc { width: 136px; } .c-amt { width: 65px; } .c-mtd { width: 87px; } .c-qtd { width: 86px; } .c-ytd { width: 85px; } .c-sel { width: 95px; }
.ledger tbody tr:nth-child(even) { background: #f3f3f3; }
.ledger tbody tr.picked:nth-child(even) { background: #d4d4d4; color: #333; }
.picked td:first-child { box-shadow: inset 2px 0 #222; }
.ledger tfoot td { height: 11px; border-top: 1px solid #7fc4bb; font-weight: 600; color: #444; }
.vscroll { width: 6px; height: 248px; margin-top: 2px; display: flex; flex-direction: column; align-items: center; gap: 4px; }
.track { flex: 1; width: 6px; background: #f2f2f2; }
.thumb { height: 50%; background: #cdcdcd; }

.filters { width: 27px; display: flex; flex-direction: column; align-items: center; padding-top: 12px; gap: 16px; color: #333; }
.filters span { writing-mode: vertical-rl; font-size: 12px; font-weight: 600; margin-top: -9px; }

.pagetabs { display: flex; height: 30px; background: #f3f2f1; font-size: 10px; }
.pagetabs button { width: 44px; background: none; border-left: 1px solid #d2d0ce; }
.arrows { width: 33px; display: flex; align-items: center; justify-content: center; gap: 10px; }
.pagetabs .first { width: 37px; padding-right: 8px; }
.pagetabs .mid { width: 50px; }
.pagetabs .wide { width: 116px; }
.pagetabs .hid { width: 78px; gap: 3px; color: #555; }
.pagetabs .cur { width: 82px; background: #fff; color: #222; font-weight: 600; border: 0; border-bottom: 3px solid #0f6b5c; border-top: 3px solid #fff; }
.pagetabs .add { flex: 1; background: #0b6e60; color: #fff; border: 0; }

/* Side panes */
.panehead { display: flex; justify-content: space-between; align-items: center; height: 33px; }
.panehead h3 { font-size: 12px; font-weight: 600; color: #222; }
.viz { width: 152px; background: #f3f2f1; display: flex; flex-direction: column; }
.viz .panehead { padding: 0 9px 0 8px; }
.sub { padding-left: 8px; font-size: 10px; line-height: 11px; font-weight: 600; }
.modes { display: flex; justify-content: space-between; padding: 3px 8px 0 7px; }
.mode { width: 27px; height: 27px; }
.mode.on { background: #cfcdcc; }
.notch { width: 100%; height: 9px; margin-top: 2px; }
.gallery { display: grid; grid-template-columns: repeat(6, 1fr); grid-auto-rows: 23px; padding: 7px 6px 7px; border-bottom: 1px solid #e3e2e0; }
.gallery button { background: none; }
.gallery button > svg { width: 16px; height: 16px; }
.gallery .sel { background: #d2d0ce; outline: 1px solid #8f8f8f; outline-offset: -2px; }
.b { fill: #6fb1ea; stroke: #2b6cab; stroke-width: .8; }
.g { fill: #c9c9c9; stroke: #777; stroke-width: .8; }
.l { fill: none; stroke: #333; }
.s { fill: none; stroke: #2f7fc4; stroke-width: 1.2; }
.fieldbox { padding: 6px 6px 0 7px; font-size: 10px; }
.fieldbox p, .fieldbox h4 { padding-left: 4px; }
.well { background: #fff; height: 27px; margin-top: 6px; padding-right: 2px; }
.chip { width: 100%; height: 19px; background: #eaeaea; border: 1px solid #c8c6c4; padding: 0 4px 0 3px; gap: 9px; }
.chip span { flex: 1; text-align: left; }
.fieldbox h4 { margin-top: 7px; font-weight: 600; }
.opt { display: flex; justify-content: space-between; align-items: center; height: 22px; padding-left: 4px; }
.fieldbox h4 + .opt { margin-top: 3px; }
.toggle { position: relative; width: 27px; height: 13px; }
.toggle input { appearance: none; margin: 0; width: 27px; height: 13px; border: 1px solid #777; border-radius: 7px; background: #fff; display: block; }
.toggle input:checked { background: #484644; border-color: #484644; }
.toggle input::after { content: ""; position: absolute; left: 4px; top: 3px; width: 7px; height: 7px; border-radius: 50%; background: #555; }
.toggle input:checked::after { left: 16px; background: #fff; }
.state { position: absolute; left: 4px; top: 0; font-size: 7px; line-height: 13px; color: #fff; }
.state.off { left: 13px; color: #555; }
.drop-here { background: #fff; height: 20px; line-height: 20px; padding-left: 4px; margin: 5px 0 0 -2px; white-space: nowrap; }

.data { width: 253px; background: #f3f2f1; border-left: 1px solid #e9e8e6; display: flex; flex-direction: column; }
.data .panehead { padding: 0 6px 0 5px; margin-bottom: 5px; }
.dsearch { height: 22px; margin: 0 1px 0 2px; border: 1px solid #888; background: #fff; display: flex; align-items: center; padding-left: 6px; gap: 3px; }
.treewrap { display: flex; flex: 1; }
.tree { flex: 1; padding-top: 1px; font-size: 10px; }
.tree li { height: 20px; display: flex; align-items: center; padding-left: 5px; }
.tree .d1 { padding-left: 17px; }
.tree .d2 { padding-left: 30px; }
.tree .leaf { padding-left: 42px; }
.ti { position: relative; margin: 0 2px 0 5px; }
.mark { position: absolute; left: 5px; top: 5px; width: 10px; height: 10px; }
.tree label { display: flex; align-items: center; }
.d2 label { padding-left: 4px; }
.tree input { appearance: none; width: 11px; height: 11px; margin: 0; border: 1px solid #8a8886; border-radius: 1px; background: #f8f8f7; }
.tree input:checked { border-color: #0f6b5c; background: #0f6b5c url("data:image/svg+xml,%3Csvg xmlns='http://www.w3.org/2000/svg' viewBox='0 0 9 9'%3E%3Cpath d='M1.500 4.500l2 2 4-4' fill='none' stroke='white'/%3E%3C/svg%3E"); }
.kind-ico { width: 12px; margin: 0 4px 0 5px; }
.dscroll { width: 7px; height: 295px; margin: 47px 1px 0 0; background: #c8c8c8; }

.status { height: 19px; display: flex; align-items: center; justify-content: space-between; background: #f5f5f5; padding: 0 18px 0 5px; font-size: 10px; border-bottom: 1px solid #999; }
.zoom { display: flex; align-items: center; gap: 5px; }
.zoom input { appearance: none; width: 82px; height: 10px; margin: 0; background: linear-gradient(#666, #666) center / 100% 1px no-repeat, linear-gradient(#666, #666) 42px center / 1px 5px no-repeat; }
.zoom input::-webkit-slider-thumb { appearance: none; width: 3px; height: 10px; background: #333; }
.pct { margin: 0 10px; color: #666; }
```
